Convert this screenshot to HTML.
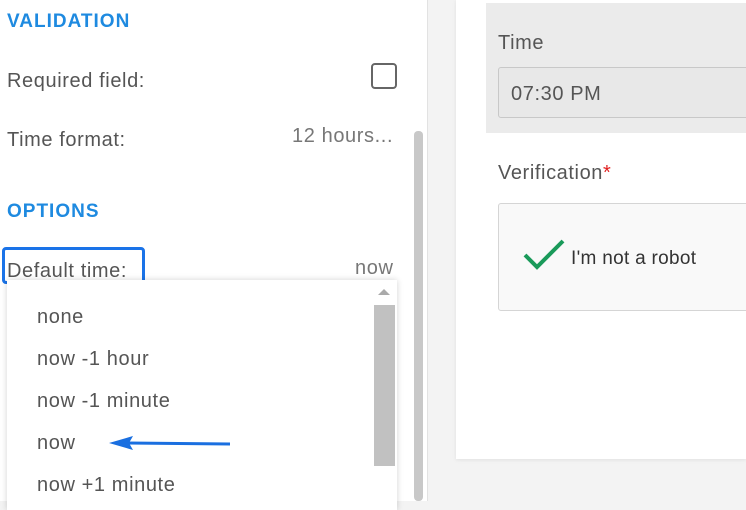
<!DOCTYPE html>
<html><head><style>
body{margin:0;width:746px;height:501px;overflow:hidden;position:relative;background:#f3f3f3;font-family:"Liberation Sans",sans-serif;}
.a{position:absolute;white-space:nowrap;}
.t{color:#555;font-size:20px;letter-spacing:0.6px;}
.h{color:#1e8ae0;font-weight:bold;font-size:19px;letter-spacing:1px;}
</style></head><body>
<div class="a" style="left:0;top:0;width:427px;height:501px;background:#fff;border-right:1px solid #e2e2e2"></div>
<div class="a" style="left:414px;top:131px;width:9px;height:370px;background:#c8c8c8;border-radius:4px"></div>
<div class="a h" style="left:7px;top:11px">VALIDATION</div>
<div class="a t" style="left:7px;top:70px">Required field:</div>
<div class="a" style="left:371px;top:63px;width:22px;height:22px;border:2px solid #666;border-radius:4px"></div>
<div class="a t" style="left:7px;top:129px">Time format:</div>
<div class="a t" style="left:292px;top:125px;color:#777">12 hours...</div>
<div class="a h" style="left:7px;top:201px">OPTIONS</div>
<div class="a t" style="left:7px;top:260px">Default time:</div>
<div class="a" style="left:2px;top:247px;width:137px;height:31px;border:3px solid #1a73e8;border-radius:4px"></div>
<div class="a t" style="left:355px;top:257px;color:#777">now</div>
<div class="a" style="left:7px;top:280px;width:390px;height:230px;background:#fff;box-shadow:0 0 6px rgba(0,0,0,.18)"></div>
<div class="a" style="left:378px;top:289px;width:0;height:0;border-left:6px solid transparent;border-right:6px solid transparent;border-bottom:6px solid #aaa"></div>
<div class="a" style="left:374px;top:305px;width:21px;height:161px;background:#c1c1c1"></div>
<div class="a t" style="left:37px;top:306px">none</div>
<div class="a t" style="left:37px;top:348px">now -1 hour</div>
<div class="a t" style="left:37px;top:390px">now -1 minute</div>
<div class="a t" style="left:37px;top:432px">now</div>
<div class="a t" style="left:37px;top:474px">now +1 minute</div>
<svg class="a" style="left:105px;top:432px" width="130" height="20"><path d="M125 12 L20 11" stroke="#1a6fe0" stroke-width="3"/><path d="M4 11 L28 4 L24 11 L28 18 Z" fill="#1a6fe0"/></svg>
<div class="a" style="left:456px;top:0;width:290px;height:459px;background:#fff;box-shadow:0 1px 4px rgba(0,0,0,.08)"></div>
<div class="a" style="left:486px;top:3px;width:260px;height:130px;background:#ebebeb"></div>
<div class="a t" style="left:498px;top:32px">Time</div>
<div class="a" style="left:498px;top:67px;width:260px;height:49px;background:#e8e8e8;border:1px solid #c8c8c8;border-radius:3px"></div>
<div class="a t" style="left:511px;top:83px">07:30 PM</div>
<div class="a t" style="left:498px;top:162px">Verification<span style="color:#e02020">*</span></div>
<div class="a" style="left:498px;top:203px;width:260px;height:106px;background:#f9f9f9;border:1px solid #d5d5d5;border-radius:3px"></div>
<svg class="a" style="left:522px;top:238px" width="45" height="34"><path d="M3 17 L15 29 L41 3" stroke="#1a9a5a" stroke-width="4" fill="none"/></svg>
<div class="a" style="left:571px;top:248px;font-size:19px;color:#333;letter-spacing:0.3px">I'm not a robot</div>
</body></html>
